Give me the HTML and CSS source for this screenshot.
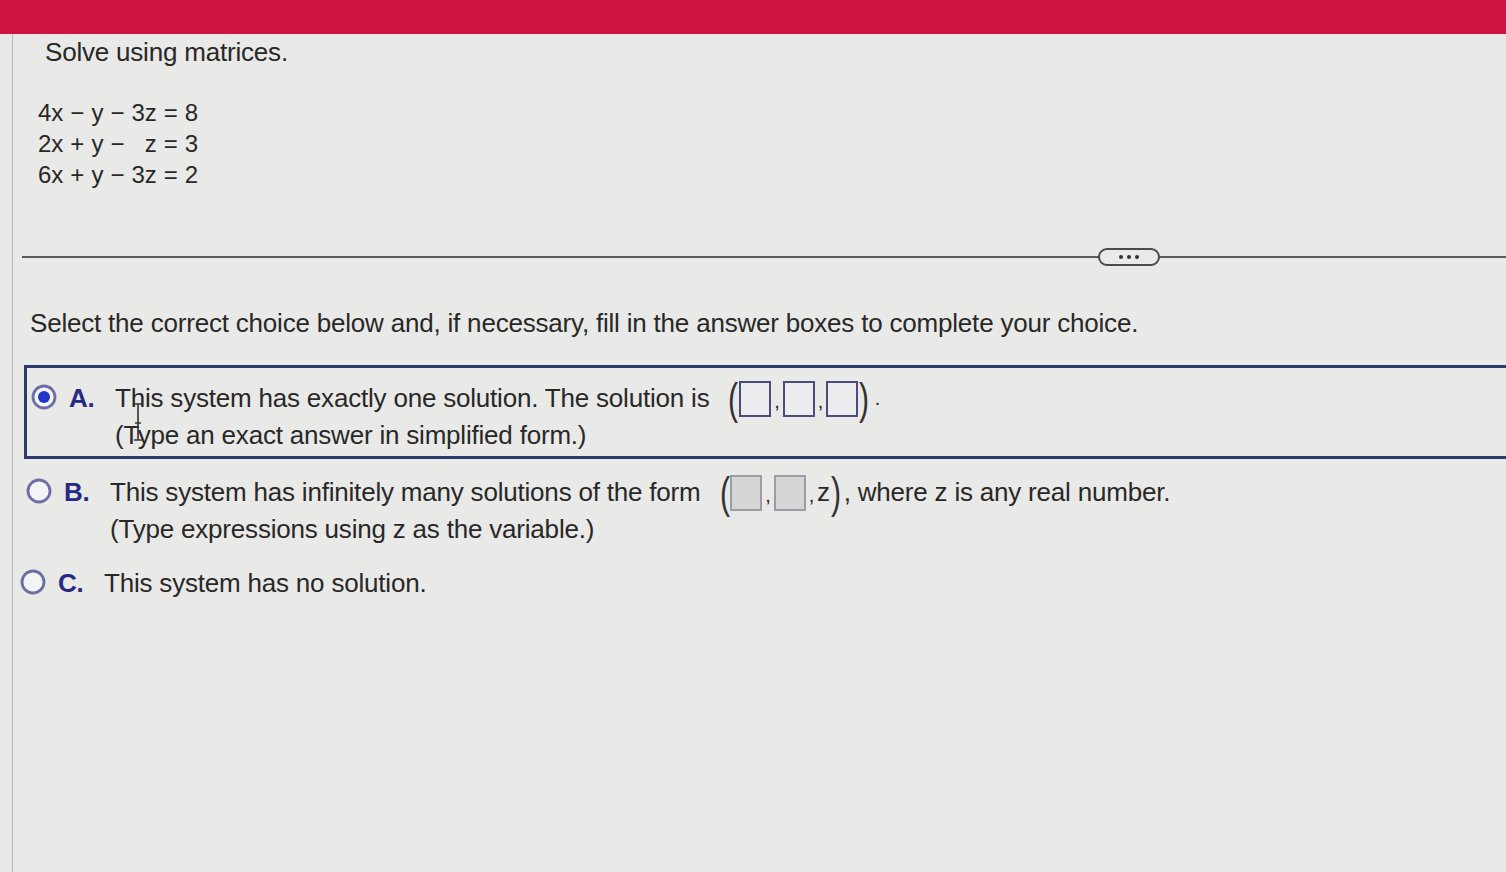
FILE: index.html
```html
<!DOCTYPE html>
<html>
<head>
<meta charset="utf-8">
<link rel="stylesheet" href="styles.css">
</head>
<body>
<div class="topbar"></div>
<div class="page">
  <div class="question">
    <h1 class="title">Solve using matrices.</h1>
    <div class="eqs">
      <span>4x</span><span>−</span><span>y</span><span>−</span><span>3z</span><span>=</span><span>8</span>
      <span>2x</span><span>+</span><span>y</span><span>−</span><span class="r">z</span><span>=</span><span>3</span>
      <span>6x</span><span>+</span><span>y</span><span>−</span><span>3z</span><span>=</span><span>2</span>
    </div>
  </div>
  <div class="divider">
    <span class="pill"><i></i><i></i><i></i></span>
  </div>
  <p class="instr">Select the correct choice below and, if necessary, fill in the answer boxes to complete your choice.</p>
  <div class="options">
    <div class="opt opt-sel">
      <svg class="radio" width="26" height="26" viewBox="0 0 26 26"><circle cx="13" cy="13" r="11" fill="#f4f4f6" stroke="#6e6ea6" stroke-width="2.8"/><circle cx="13" cy="13" r="6" fill="#2236c4"/></svg>
      <span class="letter">A.</span>
      <div class="body">
        <div class="line">This system has exactly one solution. The solution is <span class="tuple"><span class="paren">(</span><span class="box"></span><span class="comma">,</span><span class="box"></span><span class="comma">,</span><span class="box"></span><span class="paren">)</span><span class="dot">.</span></span></div>
        <div class="line">(Type an exact answer in simplified form.)</div>
      </div>
      <svg class="ibeam" width="12" height="38" viewBox="0 0 12 38"><path d="M2 1h8M6 1v36M2 37h8M3 20h6" stroke="#333" stroke-width="1.6" fill="none"/></svg>
    </div>
    <div class="opt opt-b">
      <svg class="radio" width="26" height="26" viewBox="0 0 26 26"><circle cx="13" cy="13" r="11" fill="#f4f4f6" stroke="#6e6ea6" stroke-width="2.8"/></svg>
      <span class="letter">B.</span>
      <div class="body">
        <div class="line">This system has infinitely many solutions of the form <span class="tuple"><span class="paren">(</span><span class="box box-off"></span><span class="comma">,</span><span class="box box-off"></span><span class="comma">,</span><span class="zv">z</span><span class="paren">)</span></span><span class="after">, where z is any real number.</span></div>
        <div class="line">(Type expressions using z as the variable.)</div>
      </div>
    </div>
    <div class="opt opt-c">
      <svg class="radio" width="26" height="26" viewBox="0 0 26 26"><circle cx="13" cy="13" r="11" fill="#f4f4f6" stroke="#6e6ea6" stroke-width="2.8"/></svg>
      <span class="letter">C.</span>
      <div class="body">
        <div class="line">This system has no solution.</div>
      </div>
    </div>
  </div>
</div>
</body>
</html>
```

FILE: styles.css
```css
html, body {
  margin: 0;
  padding: 0;
}
body {
  background: #e9e9e7;
  font-family: "Liberation Sans", Arial, sans-serif;
  color: #282828;
  width: 1506px;
  height: 872px;
  overflow: hidden;
}
.topbar {
  height: 34px;
  background: #cf1444;
}
.page {
  margin-left: 12px;
  border-left: 1px solid #b9b9bc;
  height: 838px;
  box-sizing: border-box;
}
.question {
  padding-left: 25px;
}
.title {
  margin: 0;
  padding: 3px 0 0 7px;
  font-size: 26px;
  font-weight: normal;
  line-height: 30px;
  letter-spacing: -0.2px;
}
.eqs {
  margin-top: 30px;
  display: grid;
  grid-template-columns: auto auto auto auto auto auto auto;
  justify-content: start;
  column-gap: 7px;
  font-size: 24px;
  line-height: 31px;
}
.eqs .r {
  text-align: right;
}
.divider {
  margin: 66px 0 0 9px;
  height: 2px;
  background: #5a5a5c;
  position: relative;
}
.pill {
  position: absolute;
  left: 1076px;
  top: -8px;
  width: 58px;
  height: 14px;
  border: 2px solid #4a4a4c;
  border-radius: 9px;
  background: #eaeaea;
  display: flex;
  align-items: center;
  justify-content: center;
  gap: 4px;
}
.pill i {
  width: 4px;
  height: 4px;
  border-radius: 50%;
  background: #333;
}
.instr {
  margin: 50px 0 0 17px;
  font-size: 26px;
  line-height: 30px;
  letter-spacing: -0.2px;
}
.options {
  margin-top: 27px;
}
.opt {
  display: flex;
  align-items: flex-start;
  font-size: 26px;
  line-height: 37px;
  letter-spacing: -0.2px;
  position: relative;
}
.opt-sel {
  margin-left: 11px;
  border: 3px solid #2b3c6c;
  border-right: none;
  padding: 12px 0 2px 4px;
}
.opt-b {
  margin-top: 15px;
  padding-left: 13px;
}
.opt-c {
  margin-top: 17px;
  padding-left: 7px;
}
.radio {
  margin-top: 4px;
  flex: none;
}
.letter {
  color: #262a86;
  font-weight: bold;
  margin-left: 12px;
  width: 46px;
  flex: none;
}
.line {
  display: flex;
  align-items: center;
  white-space: pre;
  height: 37px;
}
.tuple {
  display: inline-flex;
  align-items: center;
  margin-left: 12px;
}
.paren {
  font-size: 42px;
  line-height: 37px;
  transform: scale(0.72, 1.05);
  color: #333;
  margin: 0 -2px;
}
.box {
  width: 28px;
  height: 32px;
  border: 2px solid #4b4b7e;
  background: #ececee;
  margin: 0 1px;
}
.box-off {
  border-color: #9c9ca4;
  background: #d6d6d6;
}
.comma {
  font-size: 20px;
  margin: 6px 2px 0;
}
.zv {
  font-size: 26px;
  margin: 0 1px;
}
.dot {
  margin-left: 6px;
  font-size: 20px;
}
.after {
  margin-left: 3px;
}
.ibeam {
  position: absolute;
  left: 105px;
  top: 35px;
}
```
